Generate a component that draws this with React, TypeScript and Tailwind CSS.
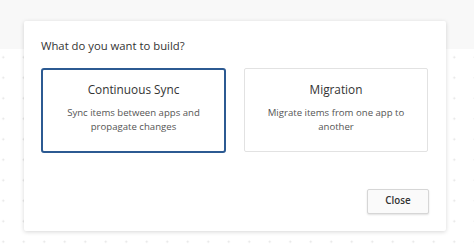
export default function App() {
  return (
    <div
      className="w-[474px] h-[245px] overflow-hidden relative bg-white"
      style={{ fontFamily: '"Open Sans", "Noto Sans", sans-serif' }}
    >
      <div className="absolute left-0 top-0 w-full h-[49px] bg-[#f8f8f8]" />
      <div className="absolute left-0 top-[49px] w-full h-[196px] bg-[radial-gradient(circle,#e4e4e4_0.8px,transparent_1.2px)] bg-[size:20.5px_20.5px] bg-[position:-7px_-2px]" />
      <div className="relative pt-[21px] pl-[24px]">
        <div className="w-[422px] h-[210px] bg-white rounded-[2px] shadow-[0_1px_4px_rgba(0,0,0,0.16)] px-[17px] pt-[12px] pb-[17px] flex flex-col">
          <div className="text-[11.3px] leading-[26px] text-[#333]">What do you want to build?</div>
          <div className="flex gap-[18px] mt-[9px]">
            <div className="w-[185px] h-[85px] rounded-[3px] border-2 border-[#2c5a92] flex flex-col items-center pt-[10px] text-center">
              <div className="text-[11.8px] leading-[18px] text-[#333]">Continuous Sync</div>
              <div className="text-[9.6px] leading-[13.6px] text-[#555] mt-[8px] px-[8px]">
                Sync items between apps and<br />propagate changes
              </div>
            </div>
            <div className="w-[184px] h-[84px] rounded-[2px] border border-[#e2e2e2] flex flex-col items-center pt-[11px] text-center">
              <div className="text-[11.8px] leading-[18px] text-[#333]">Migration</div>
              <div className="text-[9.6px] leading-[13.6px] text-[#555] mt-[8px] px-[8px]">
                Migrate items from one app to<br />another
              </div>
            </div>
          </div>
          <div className="flex-1" />
          <div className="flex justify-end">
            <button className="w-[62px] h-[25px] rounded-[2px] border border-[#d6d6d6] bg-[#fafafa] shadow-[0_1px_2px_rgba(0,0,0,0.12)] text-[9.8px] font-semibold text-[#333]">
              Close
            </button>
          </div>
        </div>
      </div>
    </div>
  );
}
